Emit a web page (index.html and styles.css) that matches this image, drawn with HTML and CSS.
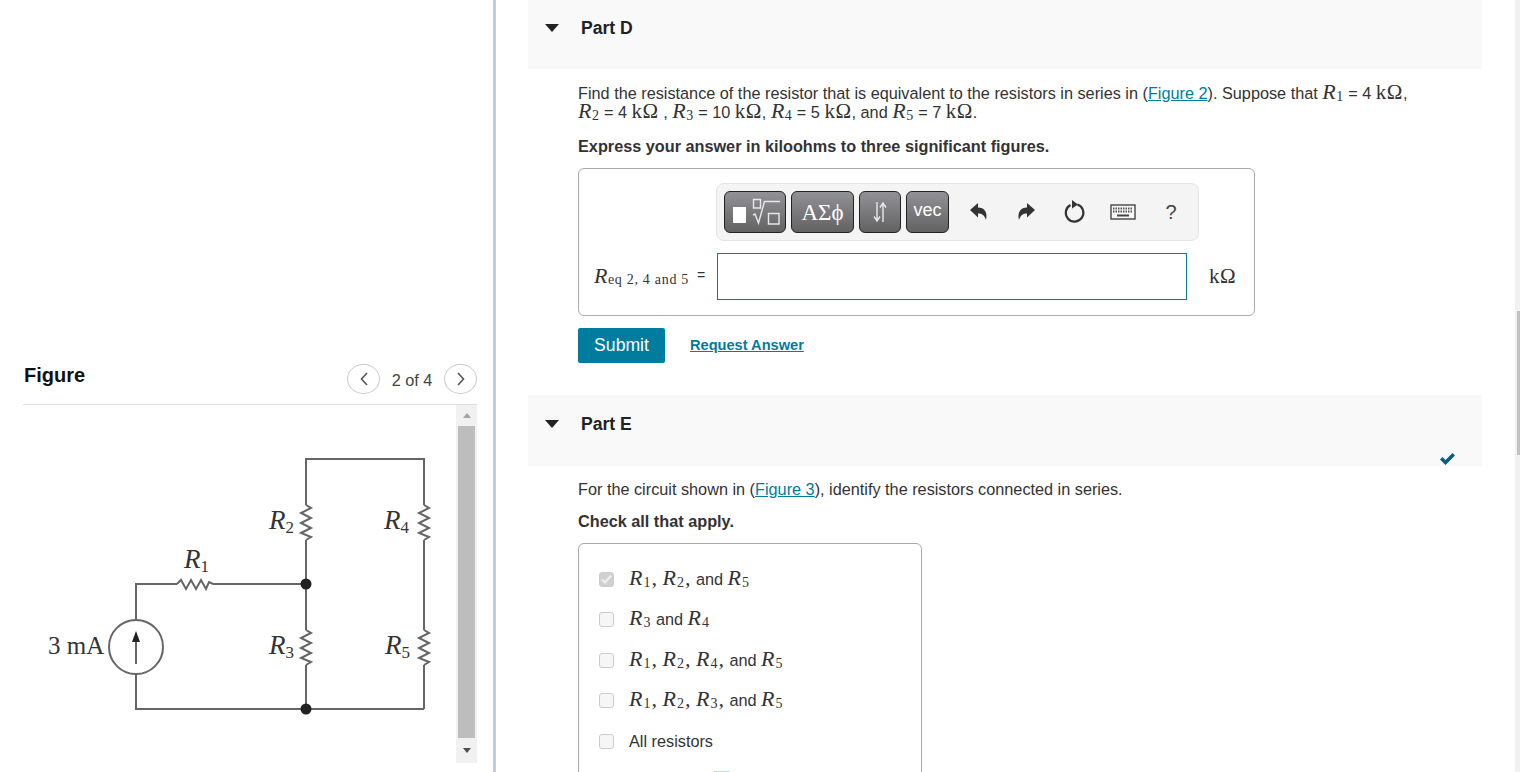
FILE: index.html
```html
<!doctype html>
<html lang="en">
<head>
    <meta charset="UTF-8">
    <title>Part D and Part E</title>
    <link rel="stylesheet" href="styles.css">
</head>
<body>
    <div class="figure-pane">
        <div class="figure-head">
            <h2>Figure</h2>
            <div class="pager">
                <span class="pager-btn"><svg width="10" height="14" viewBox="0 0 10 14"><path d="M8 1 2.500 7 8 13" /></svg></span>
                <span class="pager-text">2 of 4</span>
                <span class="pager-btn"><svg width="10" height="14" viewBox="0 0 10 14"><path d="M2 1 7.500 7 2 13" /></svg></span>
            </div>
        </div>
        <div class="figure-view">
            <svg class="circuit" width="433" height="358" viewBox="23 405 433 358">
                <defs>
                    <path id="res" d="M0 0 5 3-5 8 5 13-5 18 5 23-5 28 5 32 0 35" />
                </defs>
                <g class="wire">
                    <path d="M306 505V459H424V505" />
                    <path d="M306 540V630M424 540V630M306 665V709M424 665V709" />
                    <path d="M136 620V584H177M213 584H306M136 674V709H424" />
                    <use href="#res" x="306" y="505" />
                    <use href="#res" x="424" y="505" />
                    <use href="#res" x="306" y="630" />
                    <use href="#res" x="424" y="630" />
                    <path d="M177 584 181 580 186 589 191 580 196 589 201 580 206 589 209 582 213 584" />
                    <circle cx="136" cy="647" r="27" />
                    <path d="M136 664V638" />
                </g>
                <path class="solid" d="M136 631 140 642H132Z" />
                <circle class="solid" cx="306" cy="584" r="5.500" />
                <circle class="solid" cx="306" cy="709" r="5.500" />
                <text class="lbl" x="48" y="654">3 mA</text>
                <text class="lbl" x="269" y="529"><tspan class="it">R</tspan><tspan class="sub" dy="4">2</tspan></text>
                <text class="lbl" x="384" y="529"><tspan class="it">R</tspan><tspan class="sub" dy="4">4</tspan></text>
                <text class="lbl" x="184" y="568"><tspan class="it">R</tspan><tspan class="sub" dy="4">1</tspan></text>
                <text class="lbl" x="269" y="654"><tspan class="it">R</tspan><tspan class="sub" dy="4">3</tspan></text>
                <text class="lbl" x="385" y="654"><tspan class="it">R</tspan><tspan class="sub" dy="4">5</tspan></text>
            </svg>
            <div class="fig-scroll">
                <span class="arrow-up"></span>
                <span class="fig-thumb"></span>
                <span class="arrow-down"></span>
            </div>
        </div>
    </div>

    <div class="main-pane">
        <div class="part-head">
            <span class="caret"></span>
            <h3>Part D</h3>
        </div>
        <div class="part-body">
            <p class="prompt">Find the resistance of the resistor that is equivalent to the resistors in series in (<a href="#">Figure 2</a>). Suppose that <span class="m">R<sub>1</sub></span> = 4 <span class="u">kΩ</span>,<br><span class="m">R<sub>2</sub></span> = 4 <span class="u">kΩ</span> , <span class="m">R<sub>3</sub></span> = 10 <span class="u">kΩ</span>, <span class="m">R<sub>4</sub></span> = 5 <span class="u">kΩ</span>, and <span class="m">R<sub>5</sub></span> = 7 <span class="u">kΩ</span>.</p>
            <p class="instr">Express your answer in kiloohms to three significant figures.</p>
            <div class="answer-box">
                <div class="toolbar">
                    <span class="tool tool-tpl">
                        <svg width="52" height="30" viewBox="0 0 52 30">
                            <rect class="tpl-fill" x="4" y="10" width="13" height="16" />
                            <path class="tpl-line" d="M24.500 2.500h7v8.500h-7zM39.500 16.500h10.500v10.500h-10.500zM24 18l2-1 3.500 9 6-21.500h15.500" />
                        </svg>
                    </span>
                    <span class="tool tool-sym">ΑΣϕ</span>
                    <span class="tool tool-arrows">
                        <svg width="18" height="22" viewBox="0 0 18 22">
                            <path class="tpl-line" d="M6 1V20M3 15.500 6 20 9 15.500M12 21V2M9 6.500 12 2 15 6.500" />
                        </svg>
                    </span>
                    <span class="tool tool-vec">vec</span>
                    <span class="icon-btn icon-first">
                        <svg width="20" height="20" viewBox="0 0 20 20"><path class="reply" d="M1 8 9 1V5.500C15 5.500 19 10 17 18 15.500 13 13 11.500 9 11.500V15.500Z" /></svg>
                    </span>
                    <span class="icon-btn">
                        <svg class="flip" width="20" height="20" viewBox="0 0 20 20"><path class="reply" d="M1 8 9 1V5.500C15 5.500 19 10 17 18 15.500 13 13 11.500 9 11.500V15.500Z" /></svg>
                    </span>
                    <span class="icon-btn">
                        <svg width="24" height="26" viewBox="0 0 24 26"><path class="reset" d="M14.500 5.500A8.800 8.800 0 1 1 7.500 6" /><path class="reply" d="M9 1 15 5.500 9 9.500Z" /></svg>
                    </span>
                    <span class="icon-btn">
                        <svg width="26" height="16" viewBox="0 0 26 16">
                            <rect class="kb" x="1" y="1" width="24" height="14" />
                            <path class="kb-keys" d="M3 4.500H23M3 7.500H23" />
                            <path class="kb-bar" d="M7 11.500H19" />
                        </svg>
                    </span>
                    <span class="icon-btn help">?</span>
                </div>
                <div class="answer-row">
                    <span class="answer-label"><span class="m">R<sub class="upright">eq 2, 4 and 5</sub></span><span class="eq">=</span></span>
                    <input class="answer-input" type="text">
                    <span class="u answer-unit">kΩ</span>
                </div>
            </div>
            <div class="actions">
                <button class="submit">Submit</button>
                <a class="request" href="#">Request Answer</a>
            </div>
        </div>

        <div class="part-head part-e">
            <span class="caret"></span>
            <h3>Part E</h3>
            <svg class="done" width="17" height="14" viewBox="0 0 17 14"><path d="M1 7.500 3.500 5 6.500 8 13.500 1 16 3.500 6.500 13Z" /></svg>
        </div>
        <div class="part-body part-body-e">
            <p class="prompt">For the circuit shown in (<a href="#">Figure 3</a>), identify the resistors connected in series.</p>
            <p class="instr instr-e">Check all that apply.</p>
            <div class="choice-box">
                <div class="choice"><span class="check checked"><svg width="11" height="10" viewBox="0 0 11 10"><path d="M1 5.500 4 8.500 10 1.500" /></svg></span><span><span class="m">R<sub>1</sub></span><span class="m">,</span> <span class="m">R<sub>2</sub></span><span class="m">,</span> and <span class="m">R<sub>5</sub></span></span></div>
                <div class="choice"><span class="check"></span><span><span class="m">R<sub>3</sub></span> and <span class="m">R<sub>4</sub></span></span></div>
                <div class="choice"><span class="check"></span><span><span class="m">R<sub>1</sub></span><span class="m">,</span> <span class="m">R<sub>2</sub></span><span class="m">,</span> <span class="m">R<sub>4</sub></span><span class="m">,</span> and <span class="m">R<sub>5</sub></span></span></div>
                <div class="choice"><span class="check"></span><span><span class="m">R<sub>1</sub></span><span class="m">,</span> <span class="m">R<sub>2</sub></span><span class="m">,</span> <span class="m">R<sub>3</sub></span><span class="m">,</span> and <span class="m">R<sub>5</sub></span></span></div>
                <div class="choice"><span class="check"></span><span>All resistors</span></div>
                <span class="next-mark"></span>
            </div>
        </div>
    </div>

    <div class="page-scroll"><span class="page-thumb"></span></div>
</body>
</html>
```

FILE: styles.css
```css
* {
    box-sizing: border-box;
}
html, body {
    height: 772px;
    overflow: hidden;
}
body {
    display: flex;
    margin: 0;
    font-family: 'Liberation Sans', Arial, sans-serif;
    font-size: 16.250px;
    color: #333;
    background-color: white;
}

/* left column */
.figure-pane {
    display: flex;
    flex-direction: column;
    justify-content: flex-end;
    width: 496px;
    flex: none;
    padding: 0 16px 9px 23px;
    border-right: 3px solid #bccfe2;
}
.figure-head {
    display: flex;
    justify-content: space-between;
    align-items: flex-start;
    height: 44px;
    border-bottom: 1px solid #ddd;
}
.figure-head h2 {
    margin: 2px 0 0 1px;
    font-size: 20px;
    line-height: 24px;
    color: #111;
}
.pager {
    display: flex;
    align-items: center;
    height: 30px;
    margin-top: 3px;
}
.pager-btn {
    display: flex;
    align-items: center;
    justify-content: center;
    width: 33px;
    height: 30px;
    border: 1px solid #ccc;
    border-radius: 50%;
}
.pager-btn path {
    fill: none;
    stroke: #555;
    stroke-width: 1.6;
}
.pager-text {
    width: 64px;
    padding-top: 3px;
    text-align: center;
    color: #444;
}
.figure-view {
    display: flex;
    height: 358px;
}
.circuit {
    flex: 1;
}
.wire {
    fill: none;
    stroke: #666;
    stroke-width: 2;
}
.solid {
    fill: #222;
}
.lbl {
    font-family: 'Liberation Serif', serif;
    font-size: 25px;
    fill: #333;
}
.it {
    font-style: italic;
    font-size: 27px;
}
.sub {
    font-size: 17px;
}
.fig-scroll {
    display: flex;
    flex-direction: column;
    align-items: center;
    width: 21px;
    background-color: #f1f1f1;
}
.arrow-up {
    margin-top: 8px;
    border: 4px solid transparent;
    border-top: 0;
    border-bottom: 5px solid #a3a3a3;
}
.fig-thumb {
    width: 17px;
    height: 312px;
    margin-top: 8px;
    background-color: #bdbdbd;
}
.arrow-down {
    margin-top: 10px;
    border: 4px solid transparent;
    border-bottom: 0;
    border-top: 5px solid #505050;
}

/* right column */
.main-pane {
    flex: 1;
    height: 772px;
    overflow: hidden;
    padding: 0 33px 0 32px;
    line-height: 19px;
}
.part-head {
    position: relative;
    display: flex;
    height: 69px;
    padding: 18px 0 0 17px;
    background-color: #f9f9f9;
}
.part-e {
    height: 71px;
    margin-top: 32px;
    padding-top: 19px;
}
.part-head h3 {
    margin: 0 0 0 22px;
    font-size: 17.600px;
    line-height: 20px;
    color: #222;
}
.caret {
    margin-top: 6px;
    height: 0;
    border: 7px solid transparent;
    border-top: 8px solid #222;
    border-bottom: 0;
}
.done {
    position: absolute;
    right: 26px;
    bottom: 0;
    fill: #0b5d7e;
}
.part-body {
    padding: 15px 0 0 50px;
}
.part-body-e {
    padding-top: 14px;
}
.prompt {
    margin: 0;
}
.prompt a {
    color: #007c9e;
}
.m {
    font-family: 'Liberation Serif', serif;
    font-style: italic;
    font-size: 22px;
    line-height: 0;
    letter-spacing: 0.5px;
}
.choice .m {
    letter-spacing: 1px;
}
.m sub {
    font-style: normal;
    font-size: 14px;
    line-height: 0;
    vertical-align: -2px;
}
.m sub.upright {
    font-size: 14px;
    letter-spacing: 0.7px;
    vertical-align: -1px;
}
.u {
    font-family: 'Liberation Serif', serif;
    font-size: 21px;
    line-height: 0;
    letter-spacing: 0.5px;
}
.instr {
    margin: 15px 0 0;
    font-weight: bold;
}
.instr-e {
    margin-top: 13px;
}
.answer-box {
    width: 677px;
    height: 148px;
    margin-top: 12px;
    padding: 14px 0 0 15px;
    border: 1px solid #aaa;
    border-radius: 6px;
}
.toolbar {
    display: flex;
    align-items: center;
    width: 483px;
    height: 58px;
    margin-left: 122px;
    padding-left: 7px;
    background-color: #f4f4f4;
    border: 1px solid #e4e4e4;
    border-radius: 8px;
}
.tool {
    display: flex;
    align-items: center;
    justify-content: center;
    height: 42px;
    margin-right: 5px;
    color: white;
    border: 1px solid #222;
    border-radius: 6px;
    background: linear-gradient(#929297, #626262);
}
.tool-tpl {
    width: 62px;
}
.tool-sym {
    width: 63px;
    font-family: 'Liberation Serif', serif;
    font-size: 23px;
}
.tool-arrows {
    width: 42px;
}
.tool-vec {
    width: 43px;
    padding-bottom: 3px;
    font-size: 18px;
}
.tpl-fill {
    fill: white;
}
.tpl-line {
    fill: none;
    stroke: #e8e8e8;
    stroke-width: 1.400;
}
.icon-btn {
    display: flex;
    justify-content: center;
    width: 48px;
    color: #444;
}
.icon-first {
    margin-left: 1px;
}
.flip {
    margin-right: 2px;
    transform: scaleX(-1);
}
.reply {
    fill: #333;
}
.reset {
    fill: none;
    stroke: #333;
    stroke-width: 2.200;
}
.kb {
    fill: #f8f8f8;
    stroke: #444;
    stroke-width: 1.400;
}
.kb-keys {
    fill: none;
    stroke: #555;
    stroke-width: 2;
    stroke-dasharray: 1.500 1;
}
.kb-bar {
    stroke: #444;
    stroke-width: 2;
}
.help {
    font-size: 20px;
}
.answer-row {
    display: flex;
    align-items: center;
    margin-top: 12px;
}
.answer-label {
    display: flex;
    align-items: baseline;
    width: 123px;
    flex: none;
    padding-top: 3px;
    white-space: nowrap;
}
.eq {
    position: relative;
    top: -3px;
    margin-left: 8px;
    font-size: 14px;
}
.answer-input {
    width: 470px;
    height: 47px;
    border: 1px solid #0d7a94;
    outline: 0;
}
.answer-unit {
    margin: 0 0 2px 22px;
}
.actions {
    display: flex;
    align-items: center;
    margin-top: 12px;
}
.submit {
    width: 87px;
    height: 35px;
    padding: 0;
    font: 17.600px 'Liberation Sans', Arial, sans-serif;
    color: white;
    background-color: #007c9e;
    border: 0;
    border-radius: 2px;
}
.request {
    margin-left: 25px;
    font-size: 14.600px;
    font-weight: bold;
    color: #007c9e;
}
.choice-box {
    width: 344px;
    height: 300px;
    margin-top: 12px;
    padding: 15px 0 0 20px;
    border: 1px solid #aaa;
    border-radius: 6px;
}
.choice {
    display: flex;
    align-items: center;
    gap: 15px;
    height: 40.500px;
}
.check {
    display: flex;
    align-items: center;
    justify-content: center;
    width: 15px;
    height: 15px;
    flex: none;
    background-color: #f6f6f6;
    border: 1px solid #ccc;
    border-radius: 3px;
}
.checked {
    background-color: #d0d0d0;
}
.check path {
    fill: none;
    stroke: #efefef;
    stroke-width: 2;
}
.next-mark {
    display: block;
    width: 16px;
    height: 1px;
    margin: 9px 0 0 115px;
    background-color: #bfe0ea;
}

/* page scrollbar */
.page-scroll {
    width: 5px;
    flex: none;
    padding: 311px 0 0 2px;
    background-color: #f1f1f1;
}
.page-thumb {
    display: block;
    height: 144px;
    background-color: #c1c1c1;
}
```
